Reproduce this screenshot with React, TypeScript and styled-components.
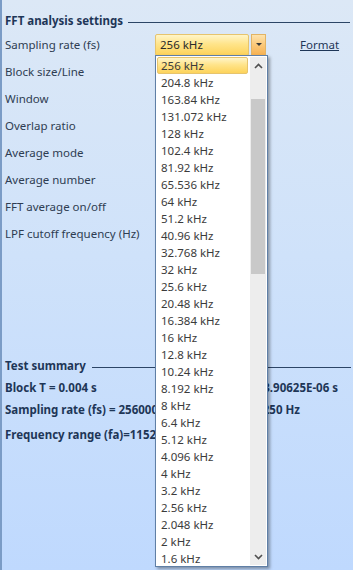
import styled, { createGlobalStyle } from 'styled-components';

const GlobalStyle = createGlobalStyle`
  html, body {
    margin: 0;
    padding: 0;
  }
  body {
    font-family: 'Segoe UI', 'Noto Sans', sans-serif;
    font-size: 11.5px;
  }
  #root {
    width: 353px;
    height: 570px;
    overflow: hidden;
  }
`;

const settingLabels = [
  'Sampling rate (fs)',
  'Block size/Line',
  'Window',
  'Overlap ratio',
  'Average mode',
  'Average number',
  'FFT average on/off',
  'LPF cutoff frequency (Hz)',
];

const rates = [
  '256 kHz', '204.8 kHz', '163.84 kHz', '131.072 kHz', '128 kHz', '102.4 kHz',
  '81.92 kHz', '65.536 kHz', '64 kHz', '51.2 kHz', '40.96 kHz', '32.768 kHz',
  '32 kHz', '25.6 kHz', '20.48 kHz', '16.384 kHz', '16 kHz', '12.8 kHz',
  '10.24 kHz', '8.192 kHz', '8 kHz', '6.4 kHz', '5.12 kHz', '4.096 kHz',
  '4 kHz', '3.2 kHz', '2.56 kHz', '2.048 kHz', '2 kHz', '1.6 kHz',
];

function Chevron({ up }: { up?: boolean }) {
  return (
    <svg width="9" height="6" viewBox="0 0 9 6">
      <path
        d={up ? 'M1 5 L4.5 1.5 L8 5' : 'M1 1 L4.5 4.5 L8 1'}
        fill="none"
        stroke="#505050"
        strokeWidth="1.6"
      />
    </svg>
  );
}

function App() {
  const selected = rates[0];

  return (
    <>
      <GlobalStyle />
      <Page>
        <SectionHeader $gap={5}>
          <SectionTitle>FFT analysis settings</SectionTitle>
          <Rule />
        </SectionHeader>
        <SettingsGrid>
          {settingLabels.map((label, i) => (
            <SettingRow key={label}>
              <Label>{label}</Label>
              {i === 0 && (
                <>
                  <Combo>
                    <ComboValue>{selected}</ComboValue>
                    <ComboButton>
                      <Arrow />
                    </ComboButton>
                  </Combo>
                  <FormatLink>Format</FormatLink>
                </>
              )}
            </SettingRow>
          ))}
        </SettingsGrid>

        <SummaryHeader $gap={6}>
          <SectionTitle>Test summary</SectionTitle>
          <Rule />
        </SummaryHeader>
        <SummaryGrid>
          <SummaryText>Block T = 0.004 s</SummaryText>
          <SummaryText>Δt = 3.90625E-06 s</SummaryText>
          <SummaryText>Sampling rate (fs) = 256000 Hz</SummaryText>
          <SummaryText>Δf = 250 Hz</SummaryText>
          <SummaryText>Frequency range (fa)=115200 Hz</SummaryText>
          <SummaryText />
        </SummaryGrid>

        <DropList>
          <Items>
            {rates.map((rate) => (
              <Item key={rate} $active={rate === selected}>
                {rate}
              </Item>
            ))}
          </Items>
          <ScrollBar>
            <ScrollArrow>
              <Chevron up />
            </ScrollArrow>
            <ScrollTrack>
              <Thumb $top={25} $height={175} />
            </ScrollTrack>
            <ScrollArrow>
              <Chevron />
            </ScrollArrow>
          </ScrollBar>
        </DropList>
      </Page>
    </>
  );
}

export default App;

const Page = styled.div`
  position: relative;
  box-sizing: border-box;
  width: 353px;
  height: 570px;
  padding: 13px 3px 0 3px;
  background: linear-gradient(#dce8f6 0%, #cfe2fa 45%, #bfd9fe 100%);
  border-left: 2px solid #7b9cc6;
  color: #2b3a4e;
`;

const SectionHeader = styled.div<{ $gap: number }>`
  display: flex;
  align-items: center;
  gap: ${({ $gap }) => $gap}px;
  height: 16px;
`;

const SummaryHeader = styled(SectionHeader)`
  margin-top: 111px;
  margin-right: -1px;
`;

const SectionTitle = styled.div`
  font-weight: bold;
  color: #1e3657;
  white-space: nowrap;
  line-height: 16px;
`;

const Rule = styled.div`
  flex: 1;
  height: 1px;
  margin-top: 2px;
  background: #2c4566;
`;

const SettingsGrid = styled.div`
  display: flex;
  flex-direction: column;
  margin-top: 2px;
`;

const SettingRow = styled.div`
  display: grid;
  grid-template-columns: 150px 111px 1fr;
  align-items: center;
  height: 27px;
`;

const Label = styled.div`
  color: #2e3d52;
  white-space: nowrap;
  line-height: 16px;
`;

const Combo = styled.div`
  display: flex;
  gap: 2px;
  height: 22px;
`;

const ComboValue = styled.div`
  flex: 1;
  box-sizing: border-box;
  padding: 0 4px;
  line-height: 20px;
  color: #2b2b2b;
  border: 1px solid #e6c46e;
  border-radius: 2px;
  background: linear-gradient(#fff5c8 0%, #ffe48a 45%, #fdd35b 100%);
`;

const ComboButton = styled.div`
  display: flex;
  align-items: center;
  justify-content: center;
  width: 15px;
  box-sizing: border-box;
  border: 1px solid #e2b465;
  background: linear-gradient(#fde3ad 0%, #fbc878 50%, #f6b152 100%);
`;

const Arrow = styled.div`
  width: 0;
  height: 0;
  border-left: 3px solid transparent;
  border-right: 3px solid transparent;
  border-top: 3px solid #3a3a3a;
`;

const FormatLink = styled.a`
  justify-self: start;
  margin-left: 34px;
  color: #1e3657;
  text-decoration: underline;
  line-height: 16px;
`;

const SummaryGrid = styled.div`
  display: grid;
  grid-template-columns: 233px 1fr;
  grid-template-rows: 20px 25px 24px;
  align-items: center;
  margin-top: 3px;
`;

const SummaryText = styled.div`
  font-weight: bold;
  color: #1e3657;
  white-space: nowrap;
`;

const DropList = styled.div`
  position: absolute;
  left: 153px;
  top: 55px;
  display: flex;
  box-sizing: border-box;
  width: 113px;
  height: 512px;
  padding: 1px;
  background: #ffffff;
  border: 1px solid #5f7fa6;
  box-shadow: 2px 2px 3px rgba(0, 0, 0, 0.35);
  z-index: 2;
`;

const Items = styled.div`
  flex: 1;
  display: flex;
  flex-direction: column;
`;

const Item = styled.div<{ $active?: boolean }>`
  box-sizing: border-box;
  height: 17px;
  margin-right: 2px;
  padding: 0 3px;
  line-height: 15px;
  color: #3b3b3b;
  white-space: nowrap;
  border: 1px solid ${({ $active }) => ($active ? '#e6c46e' : 'transparent')};
  border-radius: 2px;
  background: ${({ $active }) =>
    $active ? 'linear-gradient(#fff5c8 0%, #ffe48a 45%, #fdd35b 100%)' : 'transparent'};
`;

const ScrollBar = styled.div`
  display: flex;
  flex-direction: column;
  width: 16px;
  background: #ededed;
`;

const ScrollArrow = styled.div`
  display: flex;
  align-items: center;
  justify-content: center;
  height: 17px;
`;

const ScrollTrack = styled.div`
  flex: 1;
  display: flex;
  flex-direction: column;
`;

const Thumb = styled.div<{ $top: number; $height: number }>`
  margin: ${({ $top }) => $top}px 1px 0 1px;
  height: ${({ $height }) => $height}px;
  background: #c9c9c9;
`;
